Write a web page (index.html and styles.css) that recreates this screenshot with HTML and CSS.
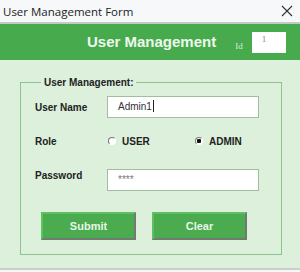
FILE: index.html
```html
<!DOCTYPE html>
<html lang="en">
<head>
    <meta charset="UTF-8">
    <title>User Management Form</title>
    <link rel="stylesheet" href="styles.css">
</head>
<body>
    <div class="window">
        <div class="titlebar">
            <span class="title">User Management Form</span>
            <svg class="close" width="12" height="12" viewBox="0 0 12 12">
                <path d="M1 1 L11 11 M11 1 L1 11" stroke="#333" stroke-width="1.1" fill="none"/>
            </svg>
        </div>

        <div class="header">
            <h1>User Management</h1>
            <span class="id-label">Id</span>
            <div class="id-box">1</div>
        </div>

        <div class="content">
            <fieldset class="group">
                <legend>User Management:</legend>

                <div class="row">
                    <label class="field-label">User Name</label>
                    <div class="textbox">Admin1<span class="caret"></span></div>
                </div>

                <div class="row role-row">
                    <label class="field-label">Role</label>
                    <div class="radios">
                        <span class="radio"><span class="dot"></span>USER</span>
                        <span class="radio checked"><span class="dot"></span>ADMIN</span>
                    </div>
                </div>

                <div class="row pass-row">
                    <label class="field-label">Password</label>
                    <div class="textbox pass">****</div>
                </div>

                <div class="buttons">
                    <button class="btn">Submit</button>
                    <button class="btn">Clear</button>
                </div>
            </fieldset>
        </div>
    </div>
</body>
</html>
```

FILE: styles.css
```css
body {
    margin: 0;
    font-family: "Liberation Sans", Arial, sans-serif;
    background-color: #f4f6f8;
}

.window {
    width: 300px;
    height: 272px;
    overflow: hidden;
}

/* 標題列 */
.titlebar {
    height: 22px;
    display: flex;
    align-items: center;
    justify-content: space-between;
    padding: 0 7px 0 3px;
    background-color: #f6f8fa;
    border-bottom: 2px solid #c3c9c4;
    font-family: "Open Sans", "Liberation Sans", sans-serif;
    font-size: 11.5px;
    color: #222;
}

/* 綠色標頭 */
.header {
    height: 36px;
    display: flex;
    align-items: center;
    background-color: #47aa4c;
    padding-right: 14px;
}

.header h1 {
    margin: 0 0 2px 87px;
    font-size: 15px;
    font-weight: bold;
    color: #eef8ee;
}

.id-label {
    margin: 8px 0 0 19px;
    font-family: "Liberation Serif", serif;
    font-size: 9px;
    color: #d8eed8;
}

.id-box {
    margin-left: 9px;
    width: 34px;
    height: 21px;
    background-color: #fff;
    box-sizing: border-box;
    padding: 2px 0 0 10px;
    font-family: "Liberation Serif", serif;
    font-size: 9px;
    color: #888;
}

/* 表單區 */
.content {
    height: 210px;
    background-color: #dcf0dc;
    border-bottom: 2px solid #c8d0c8;
    box-sizing: border-box;
    padding: 17px 0 0 20px;
}

.group {
    width: 261px;
    height: 178px;
    box-sizing: border-box;
    margin: 0;
    padding: 8px 0 0 14px;
    border: 1px solid #8cc48e;
}

.group legend {
    padding: 0 3px;
    margin-left: 6px;
    font-size: 10px;
    font-weight: bold;
    color: #222;
}

.row {
    display: flex;
    align-items: center;
    height: 22px;
}

.field-label {
    width: 72px;
    font-size: 10px;
    font-weight: bold;
    color: #222;
}

.textbox {
    width: 152px;
    height: 22px;
    box-sizing: border-box;
    background-color: #fff;
    border: 1px solid #9fbf9f;
    padding: 3px 0 0 10px;
    font-size: 10px;
    color: #333;
}

.caret {
    display: inline-block;
    width: 1px;
    height: 12px;
    margin-left: 1px;
    vertical-align: -2px;
    background-color: #222;
}

.role-row {
    margin-top: 12px;
}

.radios {
    display: flex;
}

.radio {
    display: flex;
    align-items: center;
    width: 87px;
    font-size: 10px;
    font-weight: bold;
    color: #222;
}

.radio .dot {
    width: 8px;
    height: 8px;
    margin: 0 6px 0 1px;
    border-radius: 50%;
    background-color: #fff;
    border: 1px solid;
    border-color: #777 #fff #fff #777;
    box-sizing: border-box;
}

.radio.checked .dot {
    background: radial-gradient(circle, #111 0 2px, #fff 2.5px);
}

.pass-row {
    margin-top: 17px;
    align-items: flex-start;
}

.pass-row .field-label {
    margin-top: 1px;
}

.pass {
    color: #777;
    font-size: 10px;
    padding-top: 4px;
}

.buttons {
    display: flex;
    gap: 16px;
    margin: 21px 0 0 6px;
}

.btn {
    width: 95px;
    height: 28px;
    background-color: #4aab4f;
    color: #e8f6e8;
    font-family: "Liberation Sans", Arial, sans-serif;
    font-size: 11px;
    font-weight: bold;
    border: 2px solid;
    border-color: #5fbf63 #707a70 #707a70 #5fbf63;
    padding: 0;
}
```
